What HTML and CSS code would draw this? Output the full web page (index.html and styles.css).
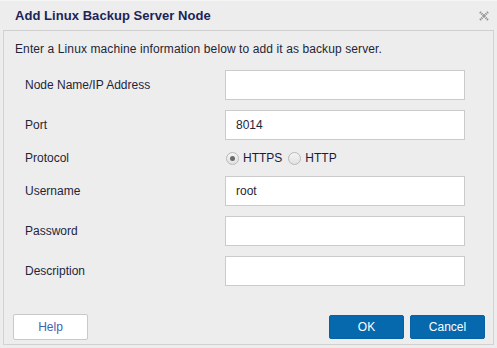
FILE: index.html
```html
<!DOCTYPE html>
<html>
<head>
<meta charset="utf-8">
<link rel="stylesheet" href="styles.css">
</head>
<body>
<div class="dialog">
  <div class="titlebar">
    <span class="title">Add Linux Backup Server Node</span>
    <svg class="close" width="10" height="10" viewBox="0 0 10 10">
      <path d="M1 1 L9 9 M9 1 L1 9" stroke="#8c8c8c" stroke-width="2.2" stroke-dasharray="1.2 0.8"/>
    </svg>
  </div>
  <div class="panel">
    <p class="intro">Enter a Linux machine information below to add it as backup server.</p>
    <div class="form">
      <label class="lbl">Node Name/IP Address</label>
      <div class="field"></div>
      <label class="lbl">Port</label>
      <div class="field">8014</div>
      <label class="lbl proto-lbl">Protocol</label>
      <div class="radios">
        <span class="radio checked"></span><span class="rtext">HTTPS</span>
        <span class="radio"></span><span class="rtext">HTTP</span>
      </div>
      <label class="lbl">Username</label>
      <div class="field">root</div>
      <label class="lbl">Password</label>
      <div class="field"></div>
      <label class="lbl">Description</label>
      <div class="field"></div>
    </div>
    <div class="buttons">
      <button class="btn help">Help</button>
      <div class="right">
        <button class="btn primary">OK</button>
        <button class="btn primary">Cancel</button>
      </div>
    </div>
  </div>
</div>
</body>
</html>
```
FILE: styles.css
```css
html, body {
  margin: 0;
  padding: 0;
  background: #ededed;
}
body {
  font-family: "Liberation Sans", Arial, sans-serif;
  font-size: 12px;
  color: #1f2538;
}
.dialog {
  width: 497px;
  height: 348px;
  box-sizing: border-box;
  border-top: 1px solid #f6f6f6;
}
.titlebar {
  height: 29px;
  display: flex;
  align-items: center;
  justify-content: space-between;
  padding: 0 8px 0 15px;
}
.title {
  font-size: 13px;
  font-weight: bold;
  color: #1b2459;
  letter-spacing: 0.05px;
}
.close {
  display: block;
  margin-top: 1px;
}
.panel {
  margin-left: 3px;
  width: 491px;
  height: 315px;
  box-sizing: border-box;
  border: 1px solid #d2d2d2;
  border-top-color: #cfcfcf;
  padding: 10px 8px 0 9px;
  display: flex;
  flex-direction: column;
}
.intro {
  margin: 0 0 13px 2px;
  line-height: 16px;
  letter-spacing: 0.1px;
}
.form {
  display: grid;
  grid-template-columns: 212px 240px;
  row-gap: 10px;
  align-items: center;
}
.lbl {
  padding-left: 12px;
  line-height: 16px;
}
.field {
  height: 30px;
  box-sizing: border-box;
  border: 1px solid #cbcbcb;
  background: #fff;
  padding: 0 10px;
  line-height: 28px;
  color: #1f2538;
}
.radios {
  height: 15px;
  display: flex;
  align-items: center;
  padding-left: 1px;
}
.radio {
  width: 11px;
  height: 11px;
  border-radius: 50%;
  border: 1px solid #b9b9b9;
  background: linear-gradient(#f4f4f4, #e2e2e2);
  box-sizing: content-box;
  position: relative;
}
.radio.checked::after {
  content: "";
  position: absolute;
  left: 3px;
  top: 3px;
  width: 5px;
  height: 5px;
  border-radius: 50%;
  background: #6a6a6a;
}
.rtext {
  margin: 0 6px 0 4px;
  color: #1a1a40;
}
.buttons {
  margin-top: 28px;
  display: flex;
  justify-content: space-between;
  align-items: flex-start;
}
.right {
  display: flex;
  gap: 6px;
  margin-top: 1px;
}
.btn {
  width: 75px;
  height: 25px;
  font-family: "Liberation Sans", Arial, sans-serif;
  font-size: 12px;
  border-radius: 2px;
  padding: 0;
  cursor: pointer;
}
.help {
  background: #fff;
  border: 1px solid #c9c9c9;
  color: #3f63b4;
  height: 26px;
}
.primary {
  background: #0668ad;
  border: 1px solid #0662a4;
  color: #fff;
  height: 24px;
}
```
